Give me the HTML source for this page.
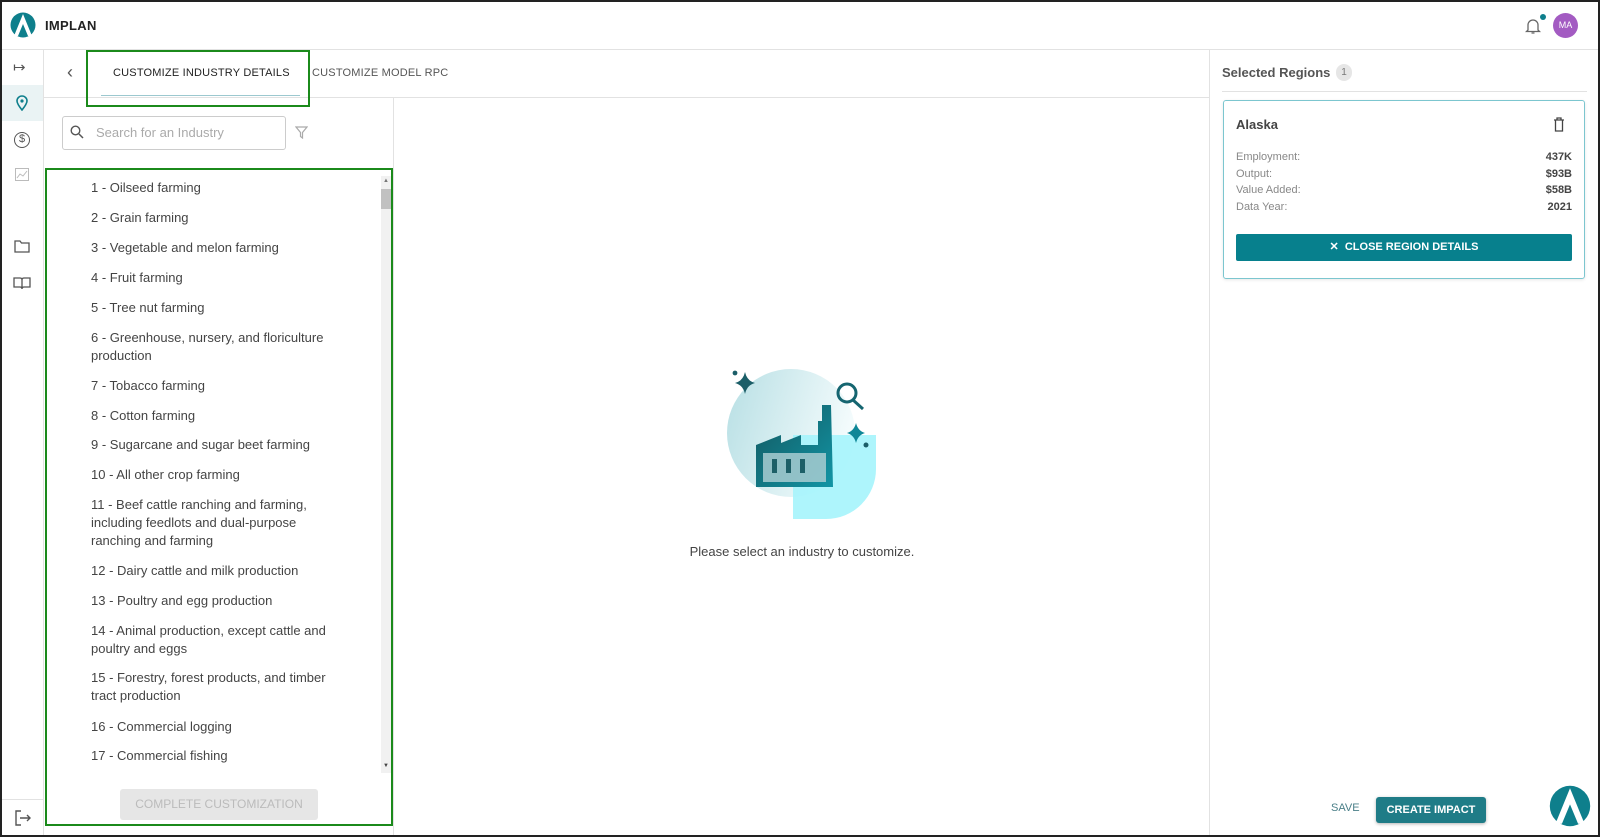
<!DOCTYPE html>
<html><head><meta charset="utf-8"><style>
*{box-sizing:border-box;margin:0;padding:0}
body{width:1600px;height:837px;overflow:hidden;background:#fff;font-family:"Liberation Sans",sans-serif;color:#333;position:relative}
.a{position:absolute}
.frame{left:0;top:0;width:1600px;height:837px;border:2px solid #222;z-index:10;pointer-events:none}
.it{position:absolute;left:91px;font-size:13px;line-height:18px;color:#444;width:270px}
.lbl{color:#888;font-size:11px}
.val{color:#444;font-size:11px;font-weight:bold;text-align:right;width:60px}
</style></head><body>
<div class="a frame"></div>
<div class="a" style="left:0;top:49px;width:1600px;height:1px;background:#e2e2e2"></div>
<svg class="a" style="left:10px;top:12px" width="26" height="26" viewBox="0 0 26 26"><circle cx="13" cy="13" r="12.5" fill="#0e7f8c"/><path d="M13 2 L4 24 L8 24 L13 12 L18 24 L22 24 Z" fill="#fff"/></svg>
<div class="a" style="left:45px;top:18px;font-size:13px;font-weight:bold;color:#222;letter-spacing:.3px">IMPLAN</div>
<svg class="a" style="left:1525px;top:17px" width="16" height="18" viewBox="0 0 16 18"><path d="M3 13 V8 a5 5 0 0 1 10 0 V13 L14.5 14.5 H1.5 Z M6.5 16 h3" fill="none" stroke="#666" stroke-width="1.3"/></svg>
<div class="a" style="left:1540px;top:14px;width:6px;height:6px;border-radius:50%;background:#0e7f8c"></div>
<div class="a" style="left:1553px;top:13px;width:25px;height:25px;border-radius:50%;background:#a35bc2;color:#fff;font-size:9px;text-align:center;line-height:25px">MA</div>
<div class="a" style="left:43px;top:49px;width:1px;height:788px;background:#e2e2e2"></div>
<div class="a" style="left:0;top:85px;width:43px;height:36px;background:#eaf3f4"></div>
<div class="a" style="left:0;top:799px;width:43px;height:1px;background:#e2e2e2"></div>
<div class="a" style="left:13px;top:58px;font-size:15px;color:#555">↦</div>
<svg class="a" style="left:15px;top:95px" width="14" height="16" viewBox="0 0 14 16"><path d="M7 15 C3 10 2 8 2 6 a5 5 0 0 1 10 0 c0 2-1 4-5 9z" fill="none" stroke="#0e7f8c" stroke-width="1.6"/><circle cx="7" cy="6" r="1.6" fill="#0e7f8c"/></svg>
<div class="a" style="left:14px;top:132px;width:16px;height:16px;border:1.4px solid #555;border-radius:50%;font-size:11px;text-align:center;line-height:13px;color:#555">$</div>
<svg class="a" style="left:15px;top:168px" width="14" height="13"><rect x=".5" y=".5" width="13" height="12" fill="none" stroke="#bbb"/><path d="M2 10 L5 6 L8 8 L12 3" fill="none" stroke="#bbb"/></svg>
<svg class="a" style="left:14px;top:240px" width="16" height="13"><path d="M1 1 h5 l1.5 2 H15 V12 H1Z" fill="none" stroke="#555" stroke-width="1.3"/></svg>
<svg class="a" style="left:13px;top:276px" width="18" height="14"><path d="M1 2 H7 Q9 2 9 4 V13 Q9 11 7 11 H1Z M17 2 H11 Q9 2 9 4 V13 Q9 11 11 11 H17Z" fill="none" stroke="#555" stroke-width="1.3"/></svg>
<svg class="a" style="left:14px;top:810px" width="18" height="16"><path d="M7 1 H2 V15 H7 M6 8 H16 M13 5 L16 8 L13 11" fill="none" stroke="#555" stroke-width="1.4"/></svg>
<div class="a" style="left:44px;top:97px;width:1165px;height:1px;background:#e2e2e2"></div>
<div class="a" style="left:67px;top:62px;font-size:18px;color:#555">‹</div>
<div class="a" style="left:86px;top:50px;width:224px;height:57px;border:2px solid #1b8a1b"></div>
<div class="a" style="left:113px;top:67px;font-size:11px;color:#222;letter-spacing:.2px">CUSTOMIZE INDUSTRY DETAILS</div>
<div class="a" style="left:101px;top:95px;width:199px;height:1px;background:#9cc8cf"></div>
<div class="a" style="left:312px;top:67px;font-size:11px;color:#555;letter-spacing:.2px">CUSTOMIZE MODEL RPC</div>
<div class="a" style="left:393px;top:97px;width:1px;height:740px;background:#e2e2e2"></div>
<div class="a" style="left:62px;top:116px;width:224px;height:34px;border:1px solid #ccc;border-radius:3px"></div>
<svg class="a" style="left:70px;top:125px" width="14" height="14"><circle cx="5.5" cy="5.5" r="4.3" fill="none" stroke="#555" stroke-width="1.4"/><path d="M9 9 L13 13" stroke="#555" stroke-width="1.5"/></svg>
<div class="a" style="left:96px;top:125px;font-size:13px;color:#aaa">Search for an Industry</div>
<svg class="a" style="left:295px;top:126px" width="13" height="13"><path d="M1 1 H12 L7.5 6.5 V12 L5.5 10.5 V6.5Z" fill="none" stroke="#aaa" stroke-width="1.2"/></svg>
<div class="a" style="left:45px;top:168px;width:348px;height:658px;border:2px solid #1b8a1b"></div>
<div class="a" style="left:381px;top:176px;width:10px;height:597px;background:#f1f1f1"></div>
<div class="a" style="left:381px;top:189px;width:10px;height:20px;background:#c1c1c1"></div>
<div class="a" style="left:383px;top:178px;font-size:6px;color:#777">▲</div>
<div class="a" style="left:383px;top:763px;font-size:6px;color:#444">▼</div>
<div class="it" style="top:179px">1 - Oilseed farming</div>
<div class="it" style="top:209px">2 - Grain farming</div>
<div class="it" style="top:239px">3 - Vegetable and melon farming</div>
<div class="it" style="top:269px">4 - Fruit farming</div>
<div class="it" style="top:299px">5 - Tree nut farming</div>
<div class="it" style="top:329px">6 - Greenhouse, nursery, and floriculture<br>production</div>
<div class="it" style="top:377px">7 - Tobacco farming</div>
<div class="it" style="top:407px">8 - Cotton farming</div>
<div class="it" style="top:436px">9 - Sugarcane and sugar beet farming</div>
<div class="it" style="top:466px">10 - All other crop farming</div>
<div class="it" style="top:496px">11 - Beef cattle ranching and farming,<br>including feedlots and dual-purpose<br>ranching and farming</div>
<div class="it" style="top:562px">12 - Dairy cattle and milk production</div>
<div class="it" style="top:592px">13 - Poultry and egg production</div>
<div class="it" style="top:622px">14 - Animal production, except cattle and<br>poultry and eggs</div>
<div class="it" style="top:669px">15 - Forestry, forest products, and timber<br>tract production</div>
<div class="it" style="top:718px">16 - Commercial logging</div>
<div class="it" style="top:747px">17 - Commercial fishing</div>
<div class="a" style="left:120px;top:789px;width:198px;height:31px;background:#e6e6e6;border-radius:3px;color:#bbb;font-size:12px;text-align:center;line-height:31px">COMPLETE CUSTOMIZATION</div>
<svg class="a" style="left:720px;top:365px" width="170" height="165" viewBox="0 0 170 165">
<defs><linearGradient id="g" x1="0" y1="0" x2="1" y2="0.3"><stop offset="0" stop-color="#b7dfe4"/><stop offset="1" stop-color="#f3fbfc"/></linearGradient>
<linearGradient id="f" x1="0" y1="0" x2="1" y2="1"><stop offset="0" stop-color="#14575f"/><stop offset="1" stop-color="#1195a5"/></linearGradient></defs>
<circle cx="71" cy="68" r="64" fill="url(#g)"/>
<path d="M73 70 H156 V104 A50 50 0 0 1 106 154 H73Z" fill="#a5f4fc" opacity=".9"/>
<path d="M36 80 L61 70 V78 L81 70 V80 H98 V56 H102 V40 H111 L113 122 H36Z" fill="url(#f)"/>
<rect x="43" y="88" width="63" height="29" fill="#a8cdd1" opacity=".85"/>
<rect x="52" y="94" width="5" height="14" fill="#1d5f67"/><rect x="66" y="94" width="5" height="14" fill="#1d5f67"/><rect x="80" y="94" width="5" height="14" fill="#1d5f67"/>
<path d="M25 7 Q27 16 35 18 Q27 20 25 29 Q23 20 15 18 Q23 16 25 7Z" fill="#1b5e68"/><circle cx="15" cy="8" r="2.4" fill="#1b5e68"/>
<circle cx="127" cy="28" r="9" fill="none" stroke="#156570" stroke-width="3"/><path d="M133 35 L143 44" stroke="#156570" stroke-width="3"/>
<path d="M136 58 Q138 66 145 68 Q138 70 136 78 Q134 70 127 68 Q134 66 136 58Z" fill="#0e8797"/><circle cx="146" cy="80" r="2.5" fill="#1b5e68"/>
</svg>
<div class="a" style="left:600px;top:544px;width:404px;text-align:center;font-size:13px;color:#444">Please select an industry to customize.</div>
<div class="a" style="left:1209px;top:49px;width:1px;height:788px;background:#e2e2e2"></div>
<div class="a" style="left:1222px;top:65px;font-size:13px;font-weight:bold;color:#555">Selected Regions</div>
<div class="a" style="left:1336px;top:64px;width:16px;height:17px;border-radius:8px;background:#e6e6e6;font-size:10px;color:#777;text-align:center;line-height:17px">1</div>
<div class="a" style="left:1222px;top:91px;width:365px;height:1px;background:#e2e2e2"></div>
<div class="a" style="left:1223px;top:100px;width:362px;height:179px;border:1.5px solid #7cc6cf;border-radius:3px;box-shadow:0 1px 3px rgba(0,0,0,.1)"></div>
<div class="a" style="left:1236px;top:117px;font-size:13px;font-weight:bold;color:#444">Alaska</div>
<svg class="a" style="left:1553px;top:117px" width="12" height="15"><path d="M1 3 H11 M4 3 V1 H8 V3 M2.5 3 V14 H9.5 V3" fill="none" stroke="#444" stroke-width="1.3"/></svg>
<div class="a lbl" style="left:1236px;top:151px">Employment:</div><div class="a val" style="left:1512px;top:151px">437K</div>
<div class="a lbl" style="left:1236px;top:168px">Output:</div><div class="a val" style="left:1512px;top:168px">$93B</div>
<div class="a lbl" style="left:1236px;top:184px">Value Added:</div><div class="a val" style="left:1512px;top:184px">$58B</div>
<div class="a lbl" style="left:1236px;top:201px">Data Year:</div><div class="a val" style="left:1512px;top:201px">2021</div>
<div class="a" style="left:1236px;top:234px;width:336px;height:27px;background:#07808d;border-radius:2px;color:#fff;font-size:11px;font-weight:bold;text-align:center;line-height:27px">✕&nbsp; CLOSE REGION DETAILS</div>
<div class="a" style="left:1331px;top:802px;font-size:11px;color:#4a7f88">SAVE</div>
<div class="a" style="left:1376px;top:797px;width:110px;height:26px;background:#1f7c87;border-radius:3px;color:#fff;font-size:11px;font-weight:bold;text-align:center;line-height:26px;box-shadow:0 1px 3px rgba(0,0,0,.3)">CREATE IMPACT</div>
<svg class="a" style="left:1549px;top:785px" width="42" height="42" viewBox="0 0 26 26"><circle cx="13" cy="13" r="12.5" fill="#0e7f8c"/><path d="M13 2 L4 24 L8 24 L13 12 L18 24 L22 24 Z" fill="#fff"/></svg>
</body></html>
